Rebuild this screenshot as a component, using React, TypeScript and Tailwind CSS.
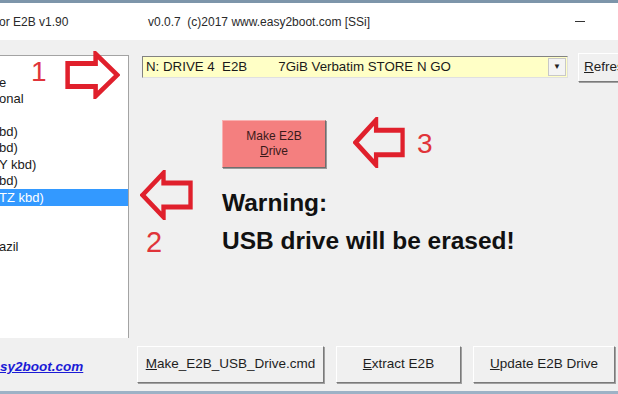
import React from 'react'

const listItems = ['', 'e', 'onal', '', 'bd)', 'bd)', 'Y kbd)', 'bd)', 'TZ kbd)', '', '', 'azil', '', '', '', '', '', '']

function OutlineArrow({ dir, className }: { dir: 'left' | 'right'; className: string }): JSX.Element {
  // block arrow outline; drawn pointing left, mirrored for right
  const pts = '3,25 27,3 27,13 58,13 58,37 27,37 27,47'
  return (
    <svg viewBox="0 0 62 50" className={className} preserveAspectRatio="none">
      <polygon
        points={pts}
        fill="none"
        stroke="#e0202c"
        strokeWidth="5"
        strokeLinejoin="miter"
        transform={dir === 'right' ? 'translate(62,0) scale(-1,1)' : undefined}
      />
    </svg>
  )
}

function WinButton({ children, className }: { children: React.ReactNode; className: string }): JSX.Element {
  return (
    <div
      className={`flex items-center justify-center shrink-0 border border-t-white border-l-white border-r-[#7a7a7a] border-b-[#7a7a7a] shadow-[1px_1px_0_#a0a0a0] bg-[#f0f0f0] text-[13.5px] text-[#1e1e1e] ${className}`}
    >
      {children}
    </div>
  )
}

export default function App(): JSX.Element {
  return (
    <div className="relative w-[618px] h-[394px] overflow-hidden bg-[#f0f0f0] flex flex-col" style={{ fontFamily: '"Liberation Sans", Arial, sans-serif' }}>
      <div className="h-[3px] bg-[#7d95aa]" />
      {/* title bar */}
      <div className="h-[37px] bg-white flex items-center text-[12px] text-[#2a2a2a]">
        <span className="-ml-[1px] w-[149px] shrink-0 whitespace-pre">or E2B v1.90</span>
        <span className="whitespace-pre">v0.0.7  (c)2017 www.easy2boot.com [SSi]</span>
        <span className="ml-auto mr-[33px] w-[10px] h-[1px] bg-[#333]" />
      </div>

      <div className="flex flex-1 min-h-0">
        {/* left column */}
        <div className="w-[129px] shrink-0 flex flex-col">
          <div className="mt-[15px] h-[283px] bg-white border-t border-r border-[#a3a3a3] pt-[2px] overflow-hidden">
            {listItems.map((t, i) => (
              <div
                key={i}
                className={`h-[16.4px] flex items-center text-[13px] whitespace-pre -ml-[1px] ${
                  i === 8 ? 'bg-[#3399ff] text-white' : 'text-[#1a1a1a]'
                }`}
              >
                {t}
              </div>
            ))}
          </div>
          <div className="mt-[19px] text-[13.5px] font-bold italic underline text-[#1b1bd6] whitespace-pre">sy2boot.com</div>
        </div>

        {/* right column */}
        <div className="flex-1 min-w-0 flex flex-col">
          <div className="flex items-start mt-[13px] ml-[13px]">
            <div className="mt-[3px] w-[426px] h-[22px] shrink-0 bg-[#ffffc6] border border-t-[#828282] border-l-[#828282] border-r-[#e0e0e0] border-b-[#e0e0e0] flex items-center text-[13.3px] text-[#1a1a1a]">
              <span className="ml-[3px] whitespace-pre">N: DRIVE 4  E2B</span>
              <span className="ml-[31px] whitespace-pre">7GiB Verbatim STORE N GO</span>
              <div className="ml-auto mr-[1px] w-[18px] h-[18px] bg-[#f4f4f4] border border-[#c8c8c8] flex items-center justify-center text-[8px] text-[#222]">▼</div>
            </div>
            <WinButton className="ml-[10px] w-[60px] h-[29px] justify-start pl-[5px]">
              <span className="whitespace-pre"><u>R</u>efresh</span>
            </WinButton>
          </div>

          <div className="ml-[93px] mt-[38px] w-[104px] h-[48px] bg-[#f47f7f] border border-t-[#f9b0b0] border-l-[#f9b0b0] border-r-[#6e6e6e] border-b-[#6e6e6e] shadow-[1px_1px_0_#9a9a9a] flex flex-col items-center justify-center text-[12px] leading-[15px] text-[#3a1a1a]">
            <span>Make E2B</span>
            <span><u>D</u>rive</span>
          </div>

          <div className="ml-[93px] mt-[16px] text-[24.5px] font-bold leading-[38px] text-[#111] whitespace-pre">
            <div>Warning:</div>
            <div>USB drive will be erased!</div>
          </div>

          <div className="mt-auto mb-[8px] ml-[8px] flex gap-[12px]">
            <WinButton className="w-[187px] h-[37px]">
              <span><u>M</u>ake_E2B_USB_Drive.cmd</span>
            </WinButton>
            <WinButton className="w-[125px] h-[37px]">
              <span><u>E</u>xtract E2B</span>
            </WinButton>
            <WinButton className="w-[142px] h-[37px]">
              <span><u>U</u>pdate E2B Drive</span>
            </WinButton>
          </div>
        </div>
      </div>
      <div className="h-[3px] bg-[#9db2c6]" />

      {/* annotations */}
      <OutlineArrow dir="right" className="absolute left-[64px] top-[51px] w-[56px] h-[48px]" />
      <OutlineArrow dir="left" className="absolute left-[140px] top-[170px] w-[54px] h-[50px]" />
      <OutlineArrow dir="left" className="absolute left-[353px] top-[117px] w-[53px] h-[51px]" />
      <span className="absolute left-[31px] top-[58px] text-[28px] leading-none text-[#e0343a]">1</span>
      <span className="absolute left-[146px] top-[228px] text-[29px] leading-none text-[#e0343a]">2</span>
      <span className="absolute left-[417px] top-[130px] text-[28px] leading-none text-[#e0343a]">3</span>
    </div>
  )
}
